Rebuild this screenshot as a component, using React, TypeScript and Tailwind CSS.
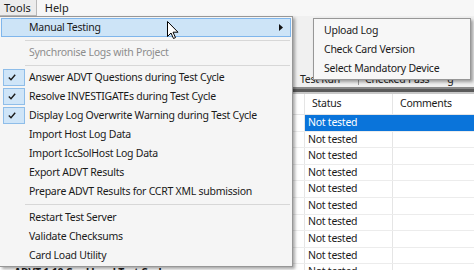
import React from "react";

const Check = () => (
  <svg width="8" height="7" viewBox="0 0 8 7" className="block">
    <path d="M0.8 3.6 L3 5.8 L7.2 0.8" fill="none" stroke="#1a1a1a" strokeWidth="1.4" />
  </svg>
);

type Item = { label: string; checked?: boolean; disabled?: boolean; sub?: boolean; hot?: boolean } | "sep";

const items: Item[] = [
  { label: "Manual Testing", sub: true, hot: true },
  "sep",
  { label: "Synchronise Logs with Project", disabled: true },
  "sep",
  { label: "Answer ADVT Questions during Test Cycle", checked: true },
  { label: "Resolve INVESTIGATEs during Test Cycle", checked: true },
  { label: "Display Log Overwrite Warning during Test Cycle", checked: true },
  { label: "Import Host Log Data" },
  { label: "Import IccSolHost Log Data" },
  { label: "Export ADVT Results" },
  { label: "Prepare ADVT Results for CCRT XML submission" },
  "sep",
  { label: "Restart Test Server" },
  { label: "Validate Checksums" },
  { label: "Card Load Utility" },
];

const rows = Array.from({ length: 10 });

export default function App() {
  return (
    <div
      className="relative w-[474px] h-[270px] overflow-hidden bg-[#f0f0f0] text-[#1a1a1a] tracking-[-0.25px]"
      style={{ fontFamily: '"Noto Sans", "Open Sans", sans-serif' }}
    >
      {/* menu bar */}
      <div className="flex h-[16px] items-stretch bg-[#f7f7f7] text-[11px] leading-[15px] tracking-normal">
        <div className="border border-[#b8b8b8] border-t-0 border-l-0 bg-[#ececec] pl-[4px] pr-[5px]">Tools</div>
        <div className="pl-[8px]">Help</div>
      </div>

      {/* background app: toolbar + grid */}
      <div className="flex h-[71px] flex-col bg-[#f0f0f0]">
        <div className="mt-auto mb-[2px] flex h-[12px] items-end gap-[18px] pl-[300px] text-[10.5px] leading-[12px] text-[#222]">
          <span>Test Run</span>
          <span className="border-l border-[#999] pl-[6px]">Checked Pass</span>
          <span>g</span>
        </div>
      </div>
      <div className="h-[2px] bg-[#8a8a8a]" />
      <div className="h-[3px] bg-[#5a5a5a]" />
      <div className="h-[2px] bg-[#c8c8c8]" />
      <div className="bg-white text-[10.5px]">
        <div className="flex h-[21px] items-center border-b border-[#e5e5e5] bg-white">
          <div className="w-[305px] h-full border-r border-[#e5e5e5]" />
          <div className="w-[88px] h-full flex items-center border-r border-[#e5e5e5] pl-[7px]">Status</div>
          <div className="flex-1 pl-[7px]">Comments</div>
        </div>
        {rows.map((_, i) => (
          <div key={i} className="flex h-[16.6px] items-center border-b border-[#ececec]">
            <div className="w-[305px] h-full border-r border-[#e5e5e5] pl-[14px] font-bold leading-[16px]">
              ADVT 1.{i + 1} Card Load Test Cycle
            </div>
            <div
              className={
                "w-[88px] h-full flex items-center border-r pl-[3px] " +
                (i === 0 ? "bg-[#0a74da] text-white border-[#0a74da]" : "border-[#e5e5e5]")
              }
            >
              Not tested
            </div>
            <div className={"flex-1 h-full " + (i === 0 ? "bg-[#0a74da]" : "")} />
          </div>
        ))}
      </div>

      {/* dropdown menu */}
      <div className="absolute left-0 top-[16px] w-[293px] border border-l-0 border-[#979797] bg-[#f5f5f5] py-[1px] shadow-[2px_2px_3px_rgba(0,0,0,0.35)] text-[10.5px]">
        {items.map((it, i) =>
          it === "sep" ? (
            <div key={i} className="flex h-[6px] items-center pl-[25px] pr-[2px]">
              <div className="h-px w-full bg-[#d7d7d7]" />
            </div>
          ) : (
            <div
              key={i}
              className={
                "relative mx-[1px] flex h-[19.1px] items-center " +
                (it.hot ? "border border-[#7fb6ec] bg-[#cde4f7]" : "border border-transparent")
              }
            >
              <div className="flex w-[26px] shrink-0 items-center justify-start pl-[1px]">
                {it.checked && (
                  <div className="flex h-[17px] w-[22px] items-center justify-start pl-[4px] border border-[#8ebde9] bg-[#cfe5f8]">
                    <Check />
                  </div>
                )}
              </div>
              <span className={"pl-[1px] " + (it.disabled ? "text-[#8d8d8d]" : "")}>{it.label}</span>
              {it.sub && (
                <svg className="absolute right-[7px] top-[5px]" width="4" height="7" viewBox="0 0 4 7">
                  <path d="M0 0 L4 3.5 L0 7 Z" fill="#111" />
                </svg>
              )}
            </div>
          )
        )}
      </div>

      {/* submenu */}
      <div className="absolute left-[313px] top-[18px] w-[158px] border border-[#979797] bg-[#f7f7f7] pt-[2px] pb-[1px] shadow-[2px_2px_3px_rgba(0,0,0,0.35)] text-[10.5px]">
        {["Upload Log", "Check Card Version", "Select Mandatory Device"].map((t) => (
          <div key={t} className="flex h-[19px] items-center pl-[10px]">
            {t}
          </div>
        ))}
      </div>

      {/* mouse cursor */}
      <svg className="absolute left-[167px] top-[21px]" width="12" height="19" viewBox="0 0 12 19">
        <path d="M0.5 0.5 L0.5 15.5 L4 12 L6.5 17.5 L8.5 16.6 L6 11.2 L11 11.2 Z" fill="white" stroke="black" strokeWidth="1" strokeLinejoin="round" />
      </svg>
    </div>
  );
}
